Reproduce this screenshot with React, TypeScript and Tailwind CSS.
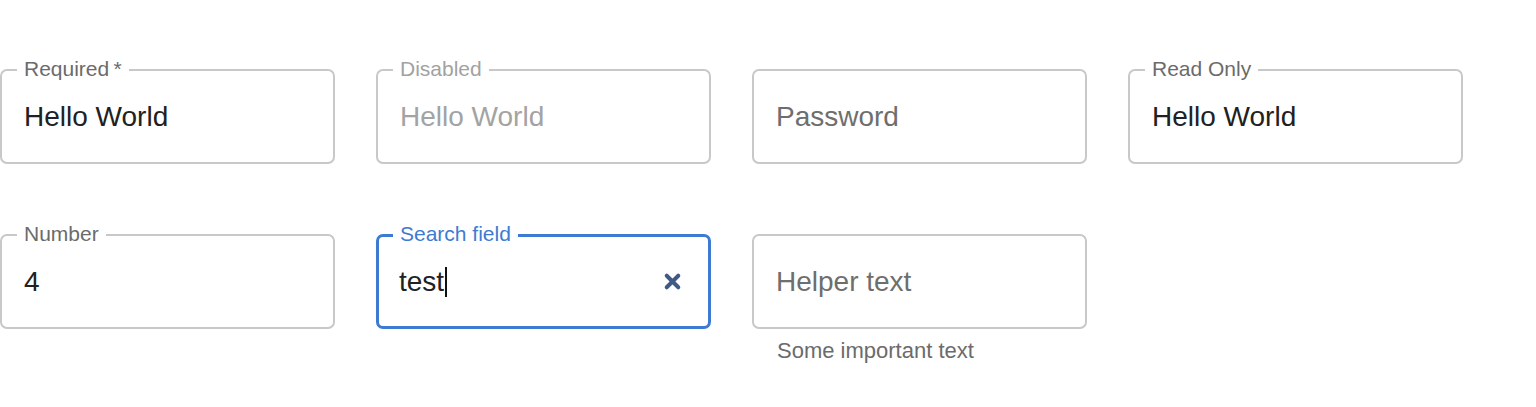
const font = "font-['Liberation_Sans','Helvetica',Arial,sans-serif]";

type FieldProps = {
  label?: string;
  value?: string;
  placeholder?: string;
  required?: boolean;
  disabled?: boolean;
  focused?: boolean;
  helper?: string;
  clearable?: boolean;
};

function ClearIcon() {
  return (
    <svg width="21" height="21" viewBox="0 0 20 20" fill="none">
      <path
        d="M4.5 4.5 15.5 15.5M15.5 4.5 4.5 15.5"
        stroke="#3f5a87"
        strokeWidth="3.8"
        strokeLinecap="round"
      />
    </svg>
  );
}

function Field({
  label,
  value,
  placeholder,
  required,
  disabled,
  focused,
  helper,
  clearable,
}: FieldProps) {
  return (
    <div className="flex flex-col">
      <div
        className={
          focused
            ? "relative h-[95px] w-[335px] rounded-[7px] border-[3px] border-[#3d7bd2]"
            : "relative h-[95px] w-[335px] rounded-[7px] border-2 border-[#c8c8c8]"
        }
      >
        {label && (
          <span
            className={
              focused
                ? "absolute left-[14px] top-[-4px] -translate-y-1/2 bg-white px-[7px] text-[21px] leading-none text-[#3d7bd2]"
                : disabled
                  ? "absolute left-[15px] top-[-3px] -translate-y-1/2 bg-white px-[7px] text-[21px] leading-none text-[#a2a2a2]"
                  : "absolute left-[15px] top-[-3px] -translate-y-1/2 bg-white px-[7px] text-[21px] leading-none text-[#6b6b6b]"
            }
          >
            {label}
            {required && <span>&thinsp;*</span>}
          </span>
        )}
        <div
          className={
            focused
              ? "flex h-full items-center justify-between pl-[20px] pr-[25px]"
              : "flex h-full items-center pl-[22px]"
          }
        >
          {value !== undefined && (
            <span
              className={
                disabled
                  ? "text-[28px] leading-none text-[#a3a3a3]"
                  : "inline-flex items-center text-[28px] leading-none text-[#212121]"
              }
            >
              {value}
              {focused && (
                <span className="ml-[1px] h-[30px] w-[1.5px] bg-[#111]" />
              )}
            </span>
          )}
          {placeholder && (
            <span className="text-[28px] leading-none text-[#6e6e6e]">
              {placeholder}
            </span>
          )}
          {clearable && <ClearIcon />}
        </div>
      </div>
      {helper && (
        <p className="mt-[10px] pl-[25px] text-[22px] leading-6 text-[#6b6b6b]">
          {helper}
        </p>
      )}
    </div>
  );
}

export default function App() {
  return (
    <div className={`min-h-screen bg-white ${font}`}>
      <div className="grid grid-cols-[repeat(4,335px)] items-start gap-x-[41px] gap-y-[70px] pt-[69px]">
        <Field label="Required" required value="Hello World" />
        <Field label="Disabled" disabled value="Hello World" />
        <Field placeholder="Password" />
        <Field label="Read Only" value="Hello World" />
        <Field label="Number" value="4" />
        <Field label="Search field" value="test" focused clearable />
        <Field placeholder="Helper text" helper="Some important text" />
      </div>
    </div>
  );
}
